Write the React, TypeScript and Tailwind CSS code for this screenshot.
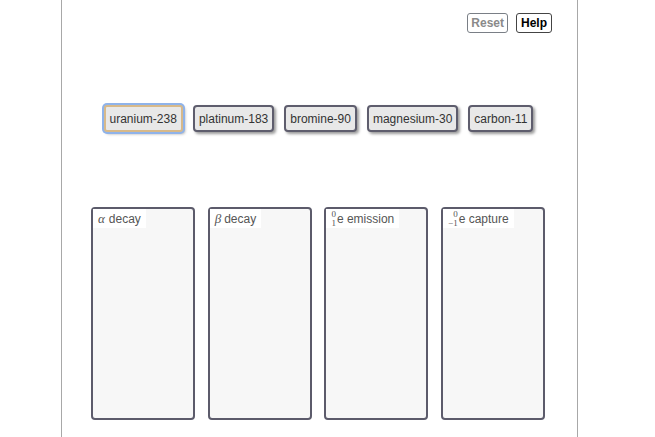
import React from 'react';

const chips = ['uranium-238', 'platinum-183', 'bromine-90', 'magnesium-30', 'carbon-11'];

function Nuclide({ top, bottom }: { top: string; bottom: string }) {
  return (
    <span className="inline-flex flex-col items-end leading-[9px] mr-[1px] font-['Liberation_Serif',serif] text-[9px]">
      <span>{top}</span>
      <span>{bottom}</span>
    </span>
  );
}

function Bin({ label }: { label: React.ReactNode }) {
  return (
    <div className="w-[104px] h-[213px] rounded-[4px] border-2 border-[#5c5b6b] bg-[#f7f7f7]">
      <div className="flex items-center h-[19px] w-fit bg-white pl-[5px] pr-[5px] text-[12px] leading-none text-[#555]">
        {label}
      </div>
    </div>
  );
}

export default function App() {
  return (
    <div className="w-[655px] h-[437px] bg-white font-['Liberation_Sans',Arial,sans-serif]">
      <div className="ml-[61px] w-[517px] h-full border-x border-[#a8a8a8] flex flex-col">
        <div className="flex justify-end gap-[8px] pt-[13px] pr-[25px]">
          <button className="h-[20px] px-[3px] rounded-[3px] border border-[#7a7f86] text-[12px] text-[#8a8a8a] font-bold bg-white">
            Reset
          </button>
          <button className="h-[20px] px-[4px] rounded-[3px] border border-[#444] text-[12px] text-black font-bold bg-white">
            Help
          </button>
        </div>

        <div className="flex justify-center gap-[10px] mt-[72px] pr-[2px]">
          {chips.map((c, i) => (
            <div
              key={c}
              className={
                i === 0
                  ? 'h-[27px] px-[4px] flex items-center rounded-[3px] border-2 border-[#d7b98a] bg-[#e8e8e8] text-[12px] text-[#333] shadow-[0_0_0_2px_#8fb3ea,2px_2px_3px_rgba(0,0,0,0.35)]'
                  : 'h-[27px] px-[4px] flex items-center rounded-[4px] border-2 border-[#5e5d6d] bg-[#e8e8e8] text-[12px] text-[#333] shadow-[2px_2px_3px_rgba(0,0,0,0.4)]'
              }
            >
              {c}
            </div>
          ))}
        </div>

        <div className="flex gap-[12.7px] mt-[75px] pl-[29px]">
          <Bin
            label={
              <>
                <span className="font-['Liberation_Serif',serif] italic text-[13px] mr-[4px]">α</span>decay
              </>
            }
          />
          <Bin
            label={
              <>
                <span className="font-['Liberation_Serif',serif] italic text-[13px] mr-[3px]">β</span>decay
              </>
            }
          />
          <Bin
            label={
              <>
                <Nuclide top="0" bottom="1" />e emission
              </>
            }
          />
          <Bin
            label={
              <>
                <Nuclide top="0" bottom="−1" />e capture
              </>
            }
          />
        </div>
      </div>
    </div>
  );
}
